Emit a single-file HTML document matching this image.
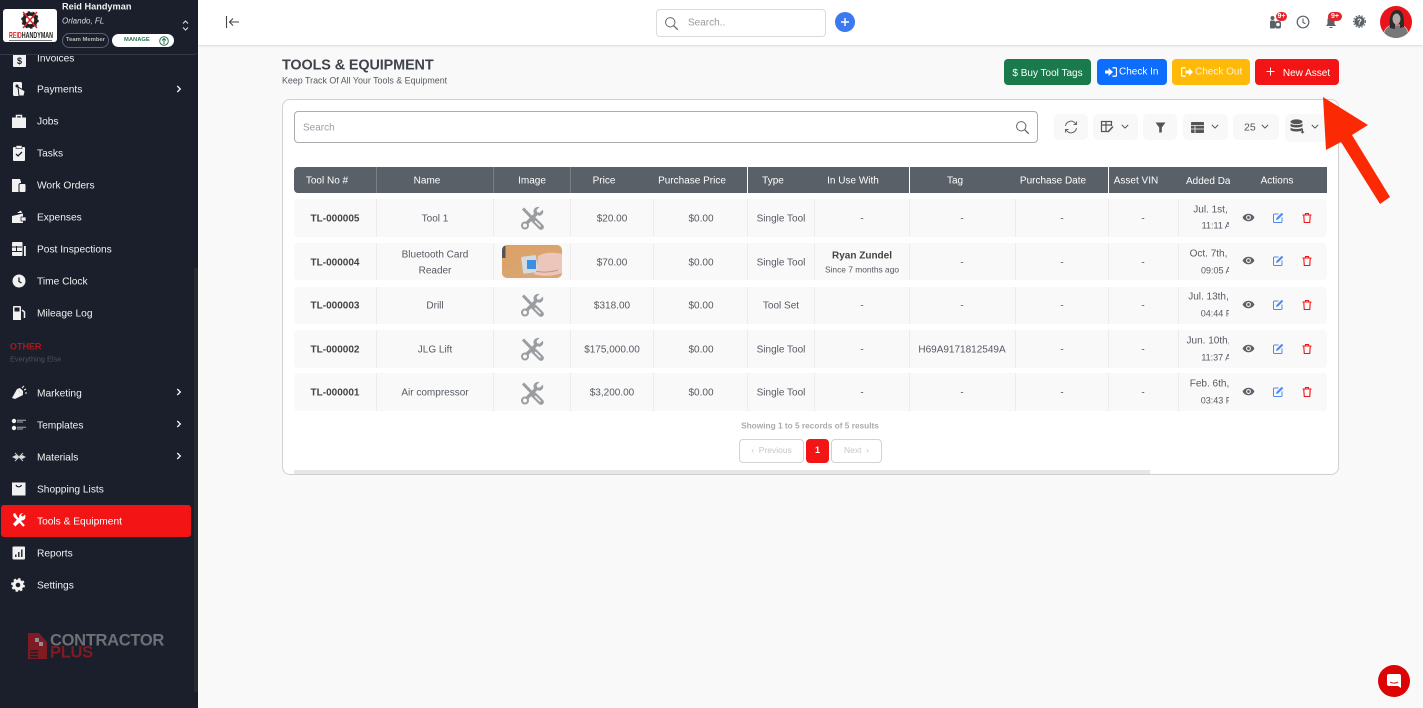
<!DOCTYPE html>
<html><head><meta charset="utf-8"><title>Tools &amp; Equipment</title>
<style>
*{box-sizing:border-box}
html,body{margin:0;padding:0;width:1423px;height:708px;overflow:hidden;background:#f9f9f9;font-family:"Liberation Sans",sans-serif;color:#4a4f57}
.a{position:absolute}
.t{position:absolute;white-space:nowrap;transform:translate(-50%,calc(-50% + 1.5px));font-size:10px;line-height:12px;color:#555a62}
.l{position:absolute;white-space:nowrap;transform:translateY(calc(-50% + 1.5px));font-size:10px;line-height:12px}
#side{position:absolute;left:0;top:0;width:198px;height:708px;background:#1a1f2b;overflow:hidden}
.m{position:absolute;left:37px;color:#f1f1f1;font-size:10.2px;line-height:12px;transform:translateY(calc(-50% + 1.5px));white-space:nowrap}
.ic{position:absolute;left:11px;width:16px;height:16px}
.chev{position:absolute;left:176px;width:6px;height:8px}
.row{position:absolute;left:294px;width:1033px;background:#f9f9f9;border-radius:4px}
.v{position:absolute;width:1px;background:#ececec}
.hv{position:absolute;top:167px;height:26px;width:1px;background:#7b7f85}
.ht{position:absolute;white-space:nowrap;transform:translate(-50%,calc(-50% + 1.5px));font-size:10px;line-height:12px;color:#fff;top:180px}
.btn{position:absolute;top:59px;height:26px;border-radius:4px;color:#fff;font-size:10px;line-height:29px;text-align:center;white-space:nowrap}
.tb{position:absolute;top:114px;height:26px;background:#f8f8f8;border-radius:5px}
.b{font-weight:bold;color:#444}
svg{display:block}
</style></head><body>
<svg width="0" height="0" style="position:absolute"><defs>
<symbol id="wr" viewBox="0 0 24 24"><path d="M3 2.500L14 14" stroke="#9a9da1" stroke-width="3" fill="none"/><path d="M13.500 13.500L21 21" stroke="#9a9da1" stroke-width="5.800" stroke-linecap="round" fill="none"/><path d="M15 15L20.500 20.500" stroke="#f9f9f9" stroke-width="1.500" fill="none"/><path d="M6.500 17.500L17 7" stroke="#9a9da1" stroke-width="3.400" fill="none"/><circle cx="5" cy="19.500" r="3" fill="#f9f9f9" stroke="#9a9da1" stroke-width="2"/><path d="M22.800 3.800l-3.300 3-2.300-.6-.7-2.200 3-3c-3-.8-6 1.300-6 4.300 0 1 .3 1.900.8 2.600l4.800 1.900c3.300-.3 5-3.400 3.700-6z" fill="#9a9da1"/></symbol>
<symbol id="eye" viewBox="0 0 24 24"><path d="M12 5C7 5 3 8 1 12c2 4 6 7 11 7s9-3 11-7c-2-4-6-7-11-7z" fill="#5c6168"/><circle cx="12" cy="12" r="4.500" fill="#f9f9f9"/><circle cx="12" cy="12" r="2.600" fill="#5c6168"/></symbol>
<symbol id="ed" viewBox="0 0 24 24"><path d="M13 4H5a2 2 0 0 0-2 2v13a2 2 0 0 0 2 2h13a2 2 0 0 0 2-2v-8" fill="none" stroke="#4a8af5" stroke-width="2"/><path d="M19.500 1.500l3 3L12 15l-4 1 1-4z" fill="#4a8af5"/></symbol>
<symbol id="tr" viewBox="0 0 24 24"><path d="M3 6h18M9 6V3h6v3M5.500 6l1 15h11l1-15" fill="none" stroke="#f01515" stroke-width="2.200"/></symbol>
<symbol id="ch" viewBox="0 0 7 9"><path d="M1.500 1l3.500 3.500L1.500 8" fill="none" stroke="#eee" stroke-width="1.600"/></symbol>
<symbol id="sch" viewBox="0 0 24 24"><circle cx="10" cy="10" r="7.500" fill="none" stroke="#666" stroke-width="1.600"/><path d="M15.500 15.500L22 22" stroke="#666" stroke-width="2"/></symbol>
<symbol id="dn" viewBox="0 0 10 6"><path d="M1 1l4 4 4-4" fill="none" stroke="#555" stroke-width="1.200"/></symbol>
</defs></svg>

<div id="side">
<div class="m" style="top:58px">Invoices</div>
<svg class="ic" style="top:52px;left:12px" viewBox="0 0 16 16"><rect x="1" y="1" width="13" height="14" rx="1" fill="#f1f1f1"/><text x="7.500" y="12" font-size="9" font-weight="bold" text-anchor="middle" fill="#1a1f2b" font-family="Liberation Sans">$</text></svg>
<div class="m" style="top:89px">Payments</div>
<svg class="ic" style="top:81px" viewBox="0 0 16 16"><rect x="2" y="1" width="9" height="14" rx="1.500" fill="#f1f1f1"/><path d="M7 6l7 4-1 5H8z" fill="#f1f1f1" stroke="#1a1f2b"/><circle cx="6" cy="5" r="1.500" fill="#1a1f2b"/></svg>
<svg class="chev" style="top:85px"><use href="#ch"/></svg>
<div class="m" style="top:121px">Jobs</div>
<svg class="ic" style="top:113px" viewBox="0 0 16 16"><path d="M1 4.500h14V15H1z" fill="#f1f1f1"/><path d="M5.500 4.500V2.500h5v2" fill="none" stroke="#f1f1f1" stroke-width="1.400"/></svg>
<div class="m" style="top:153px">Tasks</div>
<svg class="ic" style="top:145px" viewBox="0 0 16 16"><rect x="2" y="2" width="12" height="14" rx="1" fill="#f1f1f1"/><rect x="5" y="0.500" width="6" height="3" fill="#f1f1f1" stroke="#1a1f2b" stroke-width=".6"/><path d="M5 9l2 2 4-4" fill="none" stroke="#1a1f2b" stroke-width="1.300"/></svg>
<div class="m" style="top:185px">Work Orders</div>
<svg class="ic" style="top:177px" viewBox="0 0 16 16"><path d="M1 2h8l1 3v10H1z" fill="#f1f1f1"/><rect x="8" y="6.500" width="7" height="9" rx="1.500" fill="#f1f1f1" stroke="#1a1f2b"/></svg>
<div class="m" style="top:217px">Expenses</div>
<svg class="ic" style="top:209px" viewBox="0 0 16 16"><path d="M1 7l11-2.500V14H1z" fill="#f1f1f1"/><path d="M6 4l4-2.500 1 2.500z" fill="#f1f1f1"/><rect x="10" y="8" width="5" height="4" fill="#f1f1f1" stroke="#1a1f2b" stroke-width=".7"/></svg>
<div class="m" style="top:249px">Post Inspections</div>
<svg class="ic" style="top:241px" viewBox="0 0 16 16"><rect x="1" y="1" width="10.500" height="14" rx="1" fill="#f1f1f1"/><path d="M1 6h10M1 10.500h10M5.500 5v6" stroke="#1a1f2b"/><rect x="13" y="5" width="1.800" height="10" fill="#f1f1f1"/></svg>
<div class="m" style="top:281px">Time Clock</div>
<svg class="ic" style="top:273px" viewBox="0 0 16 16"><circle cx="8" cy="8" r="6.500" fill="#f1f1f1"/><path d="M8 4.500V8.500l2.500 1.500" fill="none" stroke="#1a1f2b" stroke-width="1.300"/></svg>
<div class="m" style="top:313px">Mileage Log</div>
<svg class="ic" style="top:305px" viewBox="0 0 16 16"><path d="M2 2a1 1 0 0 1 1-1h6a1 1 0 0 1 1 1v13H2z" fill="#f1f1f1"/><rect x="3.500" y="2.500" width="5" height="4" fill="#1a1f2b"/><path d="M11 5l2.500 2v6" fill="none" stroke="#f1f1f1" stroke-width="1.500"/></svg>
<div class="l" style="left:10px;top:345px;color:#b3161b;font-size:9px;font-weight:bold">OTHER</div>
<div class="l" style="left:10px;top:358px;color:#4a5160;font-size:7.400px">Everything Else</div>
<div class="m" style="top:393px">Marketing</div>
<svg class="ic" style="top:385px" viewBox="0 0 16 16"><path d="M1 13L6 4l6 6-8 4z" fill="#f1f1f1"/><path d="M6 4l3-1 3 3 0 4z" fill="#f1f1f1"/><path d="M11 3l2-2M13 5l2-1M14 8h2" stroke="#f1f1f1"/></svg>
<svg class="chev" style="top:388px"><use href="#ch"/></svg>
<div class="m" style="top:425px">Templates</div>
<svg class="ic" style="top:417px" viewBox="0 0 16 16"><circle cx="3" cy="4" r="2.200" fill="#f1f1f1"/><circle cx="3" cy="11" r="2.200" fill="#f1f1f1"/><path d="M6 3.200h9M6 5h6M6 10.200h9M6 12h6" stroke="#aaa"/></svg>
<svg class="chev" style="top:420px"><use href="#ch"/></svg>
<div class="m" style="top:457px">Materials</div>
<svg class="ic" style="top:449px" viewBox="0 0 16 16"><path d="M1 8l4-2 3 2 3-2 4 2-4 2-3-2-3 2z" fill="#ddd"/><path d="M4 4l8 8M12 4l-8 8" stroke="#ccc"/></svg>
<svg class="chev" style="top:452px"><use href="#ch"/></svg>
<div class="m" style="top:489px">Shopping Lists</div>
<svg class="ic" style="top:481px;left:11px" viewBox="0 0 16 16"><rect x="1" y="1.500" width="13.500" height="13" fill="#f1f1f1"/><path d="M5 4a3 3 0 0 0 5.500 0" fill="none" stroke="#1a1f2b" stroke-width="1.200"/></svg>
<div class="a" style="left:1px;top:505px;width:190px;height:32px;background:#f31515;border-radius:3px"></div>
<div class="m" style="top:521px;color:#fff">Tools &amp; Equipment</div>
<svg class="ic" style="top:513px;left:11px" viewBox="0 0 16 16"><path d="M3 2L13 13" stroke="#fff" stroke-width="2.400"/><path d="M2 1L4 0 6 3 4 5z" fill="#fff"/><path d="M14 1.500l-2 2-1.500-.3-.3-1.400 2-1.500C9.500.3 7.800 2 8.200 4.200L2 11l2.300 2.500 6.700-6.200c2.500.4 4.300-2.500 3-5.800z" fill="#fff"/></svg>
<div class="m" style="top:553px">Reports</div>
<svg class="ic" style="top:545px" viewBox="0 0 16 16"><rect x="1.500" y="1.500" width="12.500" height="13" rx="1" fill="#f1f1f1"/><path d="M4.800 12V9.500M7.800 12V7M10.800 12V4.500" stroke="#1a1f2b" stroke-width="1.400"/></svg>
<div class="m" style="top:585px">Settings</div>
<svg class="ic" style="top:577px;left:10px" viewBox="0 0 16 16"><circle cx="8" cy="8" r="3.900" fill="none" stroke="#f1f1f1" stroke-width="3.200"/><circle cx="8" cy="8" r="6" fill="none" stroke="#f1f1f1" stroke-width="1.800" stroke-dasharray="2.400 2.310"/></svg>
<!-- brand -->
<svg class="a" style="left:28px;top:633px" width="20" height="27" viewBox="0 0 20 27"><path d="M0 0h11l8 9v17H0z" fill="#7f1b22"/><rect x="7" y="5" width="4" height="4" fill="#8d8f94"/><rect x="11" y="9" width="4" height="4" fill="#8d8f94"/><path d="M2 18h8M2 21h8M2 24h8" stroke="#1a1f2b" stroke-width="1.400"/></svg>
<div class="l" style="left:50px;top:638.500px;color:#6e7077;font-size:16.500px;font-weight:bold;letter-spacing:-.3px">CONTRACTOR</div>
<div class="l" style="left:50px;top:651px;color:#7f1b22;font-size:16.500px;font-weight:bold;letter-spacing:-.3px">PLUS</div>
<div class="a" style="left:194px;top:268px;width:4px;height:424px;background:#2a2b2e"></div>
<!-- account header -->
<div class="a" style="left:0;top:0;width:198px;height:55px;background:#1a1f2b;border-bottom:1px solid #333845;border-radius:0 0 4px 0"></div>
<div class="a" style="left:3px;top:9px;width:54px;height:33px;background:#fff;border-radius:3px"></div>
<svg class="a" style="left:20px;top:10px" width="20" height="20" viewBox="0 0 20 20"><circle cx="10" cy="10" r="6" fill="none" stroke="#222" stroke-width="3.500"/><circle cx="10" cy="10" r="8" fill="none" stroke="#222" stroke-width="1.500" stroke-dasharray="2.500 2.500"/><path d="M3 2l14 16M17 2L3 18" stroke="#e3262b" stroke-width="1.500"/></svg>
<div class="a" style="left:9px;top:31px;color:#222;font:bold 8.500px/9px 'Liberation Sans',sans-serif;white-space:nowrap;transform:scaleX(.63);transform-origin:0 0"><span style="color:#d9252a">REID</span>HANDYMAN</div>
<div class="a" style="left:9px;top:40px;width:43px;height:1px;background:#777"></div>
<div class="l" style="left:62px;top:5px;color:#f1f1f1;font-size:9.200px;font-weight:bold">Reid Handyman</div>
<div class="l" style="left:62px;top:19.500px;color:#ddd;font-size:8px;font-style:italic">Orlando, FL</div>
<div class="a" style="left:62px;top:33px;width:47px;height:15px;border:1px solid #5a6070;border-radius:8px;color:#bbb;font-size:5.900px;font-weight:bold;line-height:13px;text-align:center;white-space:nowrap">Team Member</div>
<div class="a" style="left:112px;top:34px;width:62px;height:13px;background:#fff;border-radius:7px;color:#2d7355;font-size:5.800px;font-weight:bold;line-height:13px;padding-left:12px">MANAGE</div>
<svg class="a" style="left:158px;top:35px" width="12" height="12" viewBox="0 0 12 12"><circle cx="6" cy="6" r="4.300" fill="none" stroke="#2d7355"/><path d="M6 9V3.500M4 5.500l2-2 2 2" fill="none" stroke="#2d7355"/></svg>
<svg class="a" style="left:182px;top:20px" width="7" height="11" viewBox="0 0 7 11"><path d="M1 3.500l2.500-2.500L6 3.500M1 7.500L3.500 10 6 7.500" fill="none" stroke="#ddd" stroke-width="1.100"/></svg>
</div>

<!-- top bar -->
<div class="a" style="left:198px;top:0;width:1225px;height:45px;background:#fff;box-shadow:0 1px 2px rgba(0,0,0,.13)"></div>
<svg class="a" style="left:225px;top:15px" width="15" height="14" viewBox="0 0 15 14"><path d="M1.500 1v12" stroke="#444" stroke-width="1.100"/><path d="M14 7H4.500M8 3.500L4.500 7 8 10.500" fill="none" stroke="#444" stroke-width="1.100"/></svg>
<div class="a" style="left:656px;top:9px;width:170px;height:28px;border:1px solid #d9dbde;border-radius:4px;background:#fff"></div>
<svg class="a" style="left:664px;top:16px" width="15" height="15"><use href="#sch"/></svg>
<div class="l" style="left:688px;top:21.500px;color:#999;font-size:10px">Search..</div>
<div class="a" style="left:835px;top:12px;width:20px;height:20px;border-radius:50%;background:#3b79f0"></div>
<svg class="a" style="left:840px;top:17px" width="10" height="10"><path d="M5 1v8M1 5h8" stroke="#fff" stroke-width="1.400"/></svg>
<!-- top icons -->
<svg class="a" style="left:1268px;top:12px" width="20" height="18" viewBox="0 0 20 18"><circle cx="4.500" cy="6" r="2" fill="#5c6168"/><rect x="2" y="8.500" width="5" height="8" rx="1" fill="#5c6168"/><rect x="7" y="9" width="6" height="7.500" rx="2" fill="#5c6168"/><circle cx="10" cy="12.500" r="1.800" fill="#fff"/></svg>
<div class="a" style="left:1276px;top:12px;width:11px;height:9px;background:#e3262b;border-radius:5px;color:#fff;font:bold 7px/9px 'Liberation Sans',sans-serif;text-align:center">9+</div>
<svg class="a" style="left:1296px;top:15px" width="14" height="14" viewBox="0 0 14 14"><circle cx="7" cy="7" r="5.800" fill="none" stroke="#5c6168" stroke-width="1.200"/><path d="M7 3.500V7.500l2.500 1.200" fill="none" stroke="#5c6168" stroke-width="1.100"/></svg>
<svg class="a" style="left:1325px;top:15px" width="12" height="14" viewBox="0 0 12 14"><path d="M6 1C3 1 2.500 3.500 2.500 6v3L1 11h10L9.500 9V6C9.500 3.500 9 1 6 1z" fill="#5c6168"/><path d="M4.500 12.500h3" stroke="#5c6168"/></svg>
<div class="a" style="left:1328px;top:12px;width:14px;height:9px;background:#e3262b;border-radius:5px;color:#fff;font:bold 7px/9px 'Liberation Sans',sans-serif;text-align:center">9+</div>
<svg class="a" style="left:1353px;top:15px" width="13" height="13" viewBox="0 0 13 13"><circle cx="6.500" cy="6.500" r="5.200" fill="#5c6168"/><circle cx="6.500" cy="6.500" r="6" fill="none" stroke="#5c6168" stroke-dasharray="1.500 1.500"/><text x="6.500" y="9.500" font-size="8" font-weight="bold" text-anchor="middle" fill="#fff" font-family="Liberation Sans">?</text></svg>
<svg class="a" style="left:1380px;top:6px" width="32" height="32" viewBox="0 0 32 32"><defs><clipPath id="cp"><circle cx="16" cy="16" r="16"/></clipPath></defs><g clip-path="url(#cp)"><rect width="32" height="32" fill="#e8141a"/><path d="M3 34c0-10 4-14 9-15l8 0c6 1 9 5 9 15z" fill="#77787a" stroke="#eee" stroke-width=".6"/><path d="M10 22c-1-8 0-18 7-18s7 9 7 17l-4 1v-4h-5v5z" fill="#2d2a2a"/><ellipse cx="16.500" cy="13" rx="4" ry="5.500" fill="#b0aba8"/></g></svg>

<!-- heading -->
<div class="l" style="left:282px;top:63.500px;color:#3f444b;font-size:14.400px;font-weight:bold;letter-spacing:-.1px">TOOLS &amp; EQUIPMENT</div>
<div class="l" style="left:282px;top:79px;color:#555a62;font-size:8.900px">Keep Track Of All Your Tools &amp; Equipment</div>
<div class="btn" style="left:1004px;width:87px;background:#1a7a4c">$ Buy Tool Tags</div>
<div class="btn" style="left:1097px;width:70px;background:#0d6efd"></div>
<svg class="a" style="left:1105px;top:67px" width="12" height="10" viewBox="0 0 12 10"><path d="M0 3.500h3.500V1L8 5 3.500 9V6.500H0z" fill="#fff"/><path d="M7.500 .8h3a1 1 0 0 1 1 1v6.400a1 1 0 0 1-1 1h-3" fill="none" stroke="#fff" stroke-width="1.300"/></svg>
<div class="l" style="left:1119px;top:71px;color:#fff">Check In</div>
<div class="btn" style="left:1172px;width:78px;background:#ffb909"></div>
<svg class="a" style="left:1181px;top:67px" width="12" height="10" viewBox="0 0 12 10"><path d="M4.500 3.500H8V1l4 4-4 4V6.500H4.500z" fill="#fff"/><path d="M4.500 .8h-3a1 1 0 0 0-1 1v6.400a1 1 0 0 0 1 1h3" fill="none" stroke="#fff" stroke-width="1.300"/></svg>
<div class="l" style="left:1195px;top:71px;color:#fdf3d6">Check Out</div>
<div class="btn" style="left:1255px;width:84px;background:#f31515;padding-left:19px">New Asset</div>
<svg class="a" style="left:1266px;top:67px" width="9" height="9"><path d="M4.500 .5v8M.5 4.500h8" stroke="#fff" stroke-width="1"/></svg>

<!-- card -->
<div class="a" style="left:282px;top:99px;width:1057px;height:376px;background:#fff;border:1px solid #cfd0d2;border-radius:8px"></div>
<div class="a" style="left:294px;top:111px;width:744px;height:32px;border:1px solid #a9acb0;border-radius:4px;background:#fff"></div>
<div class="l" style="left:303px;top:126.500px;color:#9a9da1;font-size:10px">Search</div>
<svg class="a" style="left:1015px;top:120px" width="15" height="15"><use href="#sch"/></svg>

<div class="tb" style="left:1054px;width:34px"></div>
<svg class="a" style="left:1064px;top:120px" width="14" height="14" viewBox="0 0 14 14"><path d="M1.500 6A5.500 5.500 0 0 1 11 3l1.500 1.500M12.500 8A5.500 5.500 0 0 1 3 11L1.500 9.500M12.500 1.500v3h-3M1.500 12.500v-3h3" fill="none" stroke="#666" stroke-width="1"/></svg>
<div class="tb" style="left:1093px;width:45px"></div>
<svg class="a" style="left:1100px;top:120px" width="14" height="13" viewBox="0 0 14 13"><path d="M8 11.500H1.500v-10h10V6M1.500 5h10M6 1.500V11" fill="none" stroke="#555" stroke-width="1.200"/><path d="M13 6.500L8 12" stroke="#555" stroke-width="1.500"/></svg>
<svg class="a" style="left:1121px;top:124px" width="8" height="5"><use href="#dn"/></svg>
<div class="tb" style="left:1143px;width:34px"></div>
<svg class="a" style="left:1155px;top:122px" width="11" height="11" viewBox="0 0 11 11"><path d="M.5 .5h10L6.800 5.500V10.500H4.200V5.500z" fill="#555"/></svg>
<div class="tb" style="left:1183px;width:45px"></div>
<svg class="a" style="left:1191px;top:122px" width="13" height="11" viewBox="0 0 13 11"><rect width="13" height="11" rx="1" fill="#555"/><path d="M0 3.500h13M0 7h13M4 3.500V11" stroke="#f8f8f8" stroke-width=".8"/></svg>
<svg class="a" style="left:1211px;top:124px" width="8" height="5"><use href="#dn"/></svg>
<div class="tb" style="left:1233px;width:46px"></div>
<div class="l" style="left:1244px;top:126px;color:#555;font-size:10.500px">25</div>
<svg class="a" style="left:1261px;top:124px" width="8" height="5"><use href="#dn"/></svg>
<div class="tb" style="left:1285px;width:46px;height:28px"></div>
<svg class="a" style="left:1290px;top:119px" width="15" height="15" viewBox="0 0 15 15"><ellipse cx="6.500" cy="2.800" rx="6" ry="2.400" fill="#555"/><path d="M.5 4.500c1 2 11 2 12 0v2.500c-1 2-11 2-12 0zM.5 8.500c1 2 11 2 12 0V11c-1 2-11 2-12 0z" fill="#555"/><path d="M12.500 10v4M11 12.500l1.500 1.500 1.500-1.500" fill="none" stroke="#555"/></svg>
<svg class="a" style="left:1311px;top:124px" width="8" height="5"><use href="#dn"/></svg>

<!-- table head -->
<div class="a" style="left:294px;top:167px;width:1033px;height:26px;background:#5a6068;border-radius:4px 0 0 4px"></div>
<div class="hv" style="left:376px"></div><div class="hv" style="left:493px"></div><div class="hv" style="left:570px"></div>
<div class="hv" style="left:747px;background:#fff"></div><div class="hv" style="left:909px;background:#fff"></div><div class="hv" style="left:1108px;background:#fff"></div>
<div class="ht" style="left:327px">Tool No #</div><div class="ht" style="left:427px">Name</div><div class="ht" style="left:532px">Image</div><div class="ht" style="left:604px">Price</div><div class="ht" style="left:692px">Purchase Price</div><div class="ht" style="left:773px">Type</div><div class="ht" style="left:853px">In Use With</div><div class="ht" style="left:955px">Tag</div><div class="ht" style="left:1053px">Purchase Date</div><div class="ht" style="left:1136px">Asset VIN</div><div class="a" style="left:1186px;top:175.500px;width:44px;overflow:hidden;white-space:nowrap;color:#fff;font-size:10px;line-height:12px">Added Date</div><div class="ht" style="left:1277px">Actions</div>

<!-- rows -->
<div class="row" style="top:199px;height:38px"></div>
<div class="row" style="top:243px;height:37px"></div>
<div class="row" style="top:287px;height:37px"></div>
<div class="row" style="top:330px;height:38px"></div>
<div class="row" style="top:373px;height:38px"></div>

<!-- row separators -->
<div class="v" style="left:376px;top:199px;height:38px"></div><div class="v" style="left:493px;top:199px;height:38px"></div><div class="v" style="left:570px;top:199px;height:38px"></div><div class="v" style="left:653px;top:199px;height:38px"></div><div class="v" style="left:747px;top:199px;height:38px"></div><div class="v" style="left:814px;top:199px;height:38px"></div><div class="v" style="left:909px;top:199px;height:38px"></div><div class="v" style="left:1015px;top:199px;height:38px"></div><div class="v" style="left:1108px;top:199px;height:38px"></div><div class="v" style="left:1178px;top:199px;height:38px"></div>
<div class="v" style="left:376px;top:243px;height:37px"></div><div class="v" style="left:493px;top:243px;height:37px"></div><div class="v" style="left:570px;top:243px;height:37px"></div><div class="v" style="left:653px;top:243px;height:37px"></div><div class="v" style="left:747px;top:243px;height:37px"></div><div class="v" style="left:814px;top:243px;height:37px"></div><div class="v" style="left:909px;top:243px;height:37px"></div><div class="v" style="left:1015px;top:243px;height:37px"></div><div class="v" style="left:1108px;top:243px;height:37px"></div><div class="v" style="left:1178px;top:243px;height:37px"></div>
<div class="v" style="left:376px;top:287px;height:37px"></div><div class="v" style="left:493px;top:287px;height:37px"></div><div class="v" style="left:570px;top:287px;height:37px"></div><div class="v" style="left:653px;top:287px;height:37px"></div><div class="v" style="left:747px;top:287px;height:37px"></div><div class="v" style="left:814px;top:287px;height:37px"></div><div class="v" style="left:909px;top:287px;height:37px"></div><div class="v" style="left:1015px;top:287px;height:37px"></div><div class="v" style="left:1108px;top:287px;height:37px"></div><div class="v" style="left:1178px;top:287px;height:37px"></div>
<div class="v" style="left:376px;top:330px;height:38px"></div><div class="v" style="left:493px;top:330px;height:38px"></div><div class="v" style="left:570px;top:330px;height:38px"></div><div class="v" style="left:653px;top:330px;height:38px"></div><div class="v" style="left:747px;top:330px;height:38px"></div><div class="v" style="left:814px;top:330px;height:38px"></div><div class="v" style="left:909px;top:330px;height:38px"></div><div class="v" style="left:1015px;top:330px;height:38px"></div><div class="v" style="left:1108px;top:330px;height:38px"></div><div class="v" style="left:1178px;top:330px;height:38px"></div>
<div class="v" style="left:376px;top:373px;height:38px"></div><div class="v" style="left:493px;top:373px;height:38px"></div><div class="v" style="left:570px;top:373px;height:38px"></div><div class="v" style="left:653px;top:373px;height:38px"></div><div class="v" style="left:747px;top:373px;height:38px"></div><div class="v" style="left:814px;top:373px;height:38px"></div><div class="v" style="left:909px;top:373px;height:38px"></div><div class="v" style="left:1015px;top:373px;height:38px"></div><div class="v" style="left:1108px;top:373px;height:38px"></div><div class="v" style="left:1178px;top:373px;height:38px"></div>

<!-- row 1 -->
<div class="t b" style="left:335px;top:218px">TL-000005</div><div class="t" style="left:435px;top:218px">Tool 1</div>
<svg class="a" style="left:520px;top:206px" width="24" height="24"><use href="#wr"/></svg>
<div class="t" style="left:612px;top:218px">$20.00</div><div class="t" style="left:701px;top:218px">$0.00</div><div class="t" style="left:781px;top:218px">Single Tool</div><div class="t" style="left:862px;top:218px">-</div><div class="t" style="left:962px;top:218px">-</div><div class="t" style="left:1062px;top:218px">-</div><div class="t" style="left:1143px;top:218px">-</div>
<div class="a" style="left:1180px;top:202px;width:49px;height:32px;overflow:hidden"><div class="t" style="left:43px;top:7px">Jul. 1st, 2023</div><div class="t" style="left:40px;top:22px;font-size:9px">11:11 AM</div></div>
<!-- row 2 -->
<div class="t b" style="left:335px;top:262px">TL-000004</div><div class="t" style="left:435px;top:254px">Bluetooth Card</div><div class="t" style="left:435px;top:270px">Reader</div>
<svg class="a" style="left:502px;top:245px" width="60" height="33" viewBox="0 0 60 33"><defs><clipPath id="ph"><rect width="60" height="33" rx="5"/></clipPath><linearGradient id="wood" x1="0" y1="0" x2="1" y2="1"><stop offset="0" stop-color="#dca065"/><stop offset="1" stop-color="#d9a877"/></linearGradient></defs><g clip-path="url(#ph)"><rect width="60" height="33" fill="url(#wood)"/><rect x="0" y="1" width="3.500" height="12" fill="#555"/><path d="M36 11c8-4 16-4 24-2v19c-8 3-18 4-28 1l3-8z" fill="#ecc6ba"/><rect x="20" y="11" width="15" height="17" rx="1" fill="#d2dbe4" transform="rotate(-8 27 19)"/><rect x="25" y="15" width="9" height="9" fill="#3c8fe0"/><path d="M34 26c6 2 16 1 22-1" stroke="#c9927f" fill="none"/></g></svg>
<div class="t" style="left:612px;top:262px">$70.00</div><div class="t" style="left:701px;top:262px">$0.00</div><div class="t" style="left:781px;top:262px">Single Tool</div><div class="t b" style="left:862px;top:254.500px">Ryan Zundel</div><div class="t" style="left:862px;top:268px;font-size:8.400px">Since 7 months ago</div><div class="t" style="left:962px;top:262px">-</div><div class="t" style="left:1062px;top:262px">-</div><div class="t" style="left:1143px;top:262px">-</div>
<div class="a" style="left:1180px;top:246px;width:49px;height:32px;overflow:hidden"><div class="t" style="left:41px;top:6.500px">Oct. 7th, 2022</div><div class="t" style="left:40px;top:22.500px;font-size:9px">09:05 AM</div></div>
<!-- row 3 -->
<div class="t b" style="left:335px;top:305px">TL-000003</div><div class="t" style="left:435px;top:305px">Drill</div>
<svg class="a" style="left:520px;top:293px" width="24" height="24"><use href="#wr"/></svg>
<div class="t" style="left:612px;top:305px">$318.00</div><div class="t" style="left:701px;top:305px">$0.00</div><div class="t" style="left:781px;top:305px">Tool Set</div><div class="t" style="left:862px;top:305px">-</div><div class="t" style="left:962px;top:305px">-</div><div class="t" style="left:1062px;top:305px">-</div><div class="t" style="left:1143px;top:305px">-</div>
<div class="a" style="left:1180px;top:289px;width:49px;height:32px;overflow:hidden"><div class="t" style="left:41px;top:6.500px">Jul. 13th, 2022</div><div class="t" style="left:40px;top:22.500px;font-size:9px">04:44 PM</div></div>
<!-- row 4 -->
<div class="t b" style="left:335px;top:349px">TL-000002</div><div class="t" style="left:435px;top:349px">JLG Lift</div>
<svg class="a" style="left:520px;top:337px" width="24" height="24"><use href="#wr"/></svg>
<div class="t" style="left:612px;top:349px">$175,000.00</div><div class="t" style="left:701px;top:349px">$0.00</div><div class="t" style="left:781px;top:349px">Single Tool</div><div class="t" style="left:862px;top:349px">-</div><div class="t" style="left:962px;top:349px">H69A9171812549A</div><div class="t" style="left:1062px;top:349px">-</div><div class="t" style="left:1143px;top:349px">-</div>
<div class="a" style="left:1180px;top:333px;width:49px;height:32px;overflow:hidden"><div class="t" style="left:41px;top:6.500px">Jun. 10th, 2022</div><div class="t" style="left:40px;top:22.500px;font-size:9px">11:37 AM</div></div>
<!-- row 5 -->
<div class="t b" style="left:335px;top:392px">TL-000001</div><div class="t" style="left:435px;top:392px">Air compressor</div>
<svg class="a" style="left:520px;top:381px" width="24" height="24"><use href="#wr"/></svg>
<div class="t" style="left:612px;top:392px">$3,200.00</div><div class="t" style="left:701px;top:392px">$0.00</div><div class="t" style="left:781px;top:392px">Single Tool</div><div class="t" style="left:862px;top:392px">-</div><div class="t" style="left:962px;top:392px">-</div><div class="t" style="left:1062px;top:392px">-</div><div class="t" style="left:1143px;top:392px">-</div>
<div class="a" style="left:1180px;top:376px;width:49px;height:32px;overflow:hidden"><div class="t" style="left:42px;top:6.500px">Feb. 6th, 2022</div><div class="t" style="left:40px;top:22.500px;font-size:9px">03:43 PM</div></div>

<!-- action icons -->
<svg class="a" style="left:1242px;top:211px" width="13" height="13"><use href="#eye"/></svg><svg class="a" style="left:1272px;top:212px" width="12" height="12"><use href="#ed"/></svg><svg class="a" style="left:1301px;top:212px" width="12" height="12"><use href="#tr"/></svg>
<svg class="a" style="left:1242px;top:254px" width="13" height="13"><use href="#eye"/></svg><svg class="a" style="left:1272px;top:255px" width="12" height="12"><use href="#ed"/></svg><svg class="a" style="left:1301px;top:255px" width="12" height="12"><use href="#tr"/></svg>
<svg class="a" style="left:1242px;top:298px" width="13" height="13"><use href="#eye"/></svg><svg class="a" style="left:1272px;top:299px" width="12" height="12"><use href="#ed"/></svg><svg class="a" style="left:1301px;top:299px" width="12" height="12"><use href="#tr"/></svg>
<svg class="a" style="left:1242px;top:342px" width="13" height="13"><use href="#eye"/></svg><svg class="a" style="left:1272px;top:343px" width="12" height="12"><use href="#ed"/></svg><svg class="a" style="left:1301px;top:343px" width="12" height="12"><use href="#tr"/></svg>
<svg class="a" style="left:1242px;top:385px" width="13" height="13"><use href="#eye"/></svg><svg class="a" style="left:1272px;top:386px" width="12" height="12"><use href="#ed"/></svg><svg class="a" style="left:1301px;top:386px" width="12" height="12"><use href="#tr"/></svg>

<!-- pagination -->
<div class="t" style="left:810px;top:424px;font-size:8.300px;font-weight:bold;color:#a8abae">Showing 1 to 5 records of 5 results</div>
<div class="a" style="left:739px;top:439px;width:65px;height:24px;border:1px solid #d2d3d5;border-radius:4px;background:#fff;color:#c3c5c7;font-size:8.500px;line-height:21px;text-align:center;white-space:nowrap">&lsaquo;&nbsp; Previous</div>
<div class="a" style="left:806px;top:439px;width:23px;height:24px;background:#f31515;border-radius:4px;color:#fff;font-size:9px;font-weight:bold;line-height:23px;text-align:center">1</div>
<div class="a" style="left:831px;top:439px;width:51px;height:24px;border:1px solid #d2d3d5;border-radius:4px;background:#fff;color:#c3c5c7;font-size:8.500px;line-height:21px;text-align:center;white-space:nowrap">Next &nbsp;&rsaquo;</div>
<div class="a" style="left:294px;top:470px;width:856px;height:4px;background:#e6e6e6"></div>

<!-- arrow -->
<svg class="a" style="left:1320px;top:95px" width="72" height="112" viewBox="0 0 72 112"><path d="M3 2L48 30 32 40 70 102 60 109 21 47 6 55z" fill="#fb2a05"/></svg>

<!-- chat -->
<div class="a" style="left:1378px;top:665px;width:32px;height:32px;border-radius:50%;background:#dc0404"></div>
<svg class="a" style="left:1386px;top:673px" width="16" height="16" viewBox="0 0 16 16"><path d="M3 1h10a2 2 0 0 1 2 2v12l-3-2H3a2 2 0 0 1-2-2V3a2 2 0 0 1 2-2z" fill="#fff"/><path d="M4 9c2 1.500 6 1.500 8 0" fill="none" stroke="#dc0404" stroke-width="1"/></svg>
</body></html>
